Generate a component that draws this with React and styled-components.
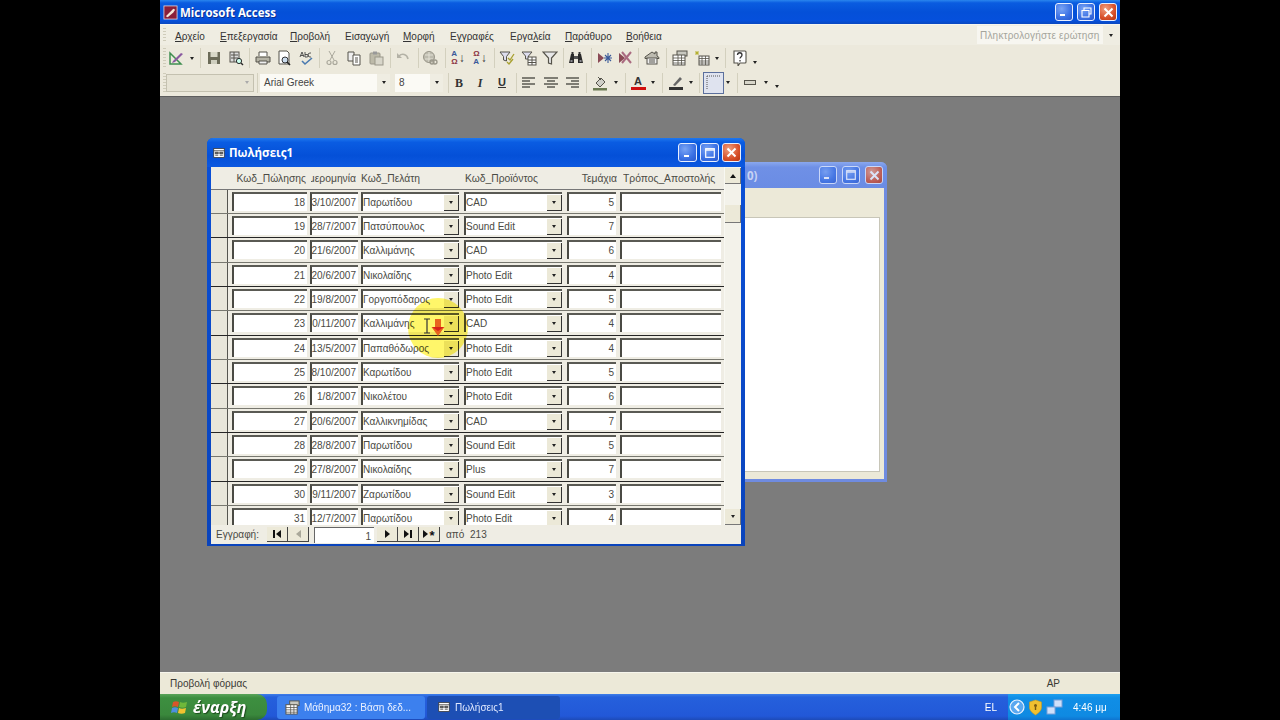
import React from 'react';
import styled, { createGlobalStyle, css } from 'styled-components';

const Global = createGlobalStyle`
  html, body { margin: 0; padding: 0; background: #000; }
  body { font-family: "Liberation Sans", Arial, sans-serif; font-size: 10px; color: #222; }
  * { box-sizing: border-box; }
`;

const Stage = styled.div`
  width: 1280px; height: 720px; background: #000; display: flex; justify-content: center; overflow: hidden;
`;
const Desktop = styled.div`
  width: 960px; height: 720px; display: flex; flex-direction: column; position: relative; filter: blur(0.35px);
`;
const MainTitle = styled.div`
  height: 24px; flex: none; display: flex; align-items: center; padding: 0 3px 0 3px; gap: 2px;
  background: linear-gradient(180deg, #2a86ee 0%, #0a5ce0 12%, #0450d8 50%, #0550dc 85%, #0a48c0 100%);
  color: #fff; font: bold 11.5px "Open Sans", "Liberation Sans", sans-serif;
  text-shadow: 1px 1px 0 #0a2f90;
`;
const TitleText = styled.span`flex: 1; white-space: nowrap;`;
const Controls = styled.div`display: flex; gap: ${p => p.$gap ?? 4}px; align-items: center;`;
const Ctl = styled.div`
  width: ${p => p.$s ?? 18}px; height: ${p => p.$s ?? 18}px; border-radius: 3px; border: 1px solid #e8efff;
  display: flex; align-items: center; justify-content: center; opacity: ${p => p.$dim ? 0.75 : 1};
  background: ${p => p.$red
    ? 'radial-gradient(circle at 35% 30%, #f0a080, #d8502a 60%, #b83410)'
    : 'radial-gradient(circle at 35% 30%, #7aa4f4, #3a70e4 60%, #2a58cc)'};
`;
const Menu = styled.div`
  height: 21px; flex: none; display: flex; align-items: center; position: relative; background: #efede2;
  border-top: 1px solid #f6f5ee;
`;
const Grip = styled.div`
  width: 3px; height: ${p => p.$h ?? 15}px; margin-left: 3px; flex: none;
  background-image: linear-gradient(#cfccba 50%, transparent 50%); background-size: 3px 3px;
`;
const MenuItem = styled.span`
  position: relative; margin-left: ${p => p.$ml}px; font: 10px "Liberation Sans", sans-serif; color: #333; white-space: nowrap;
  width: ${p => p.$w}px; flex: none; padding-top: 2px;
  u { text-decoration-thickness: 1px; text-underline-offset: 1px; }
`;
const Ask = styled.div`
  margin-left: auto; width: 126px; height: 18px; background: #f7f6f0; color: #a5a59c; display: flex; align-items: center;
  font: 10px "Liberation Sans", sans-serif; padding-left: 3px; white-space: nowrap; overflow: hidden; letter-spacing: .2px;
`;
const Drop = styled.i`
  display: block; width: 0; height: 0; flex: none; border-left: 2.5px solid transparent; border-right: 2.5px solid transparent;
  border-top: 3px solid ${p => p.$c ?? '#222'};
`;
const AskDrop = styled.div`width: 15px; display: flex; justify-content: center; margin-right: 2px; flex: none;`;
const Toolbar = styled.div`
  height: ${p => p.$h}px; flex: none; display: flex; align-items: center; background: #ece9dc;
  padding-bottom: ${p => p.$pb ?? 0}px;
`;
const Tool = styled.div`
  flex: none; width: ${p => p.$w}px; margin-left: ${p => p.$ml}px; display: flex; align-items: center; justify-content: center;
  ${p => p.$low && css`padding-top: 8px;`}
`;
const Sep = styled.div`
  flex: none; width: 1px; height: 20px; background: #d3d0be; margin-left: ${p => p.$ml}px;
`;
const Combo = styled.div`
  flex: none; width: ${p => p.$w}px; margin-left: ${p => p.$ml}px; height: 18px; display: flex; align-items: center;
  background: ${p => p.$off ? '#e6e3d4' : '#fbfaf5'}; border: ${p => p.$off ? '1px solid #c4c1b0' : 'none'};
  font: 10px "Liberation Sans", sans-serif; color: #444; padding-left: 4px; justify-content: space-between;
`;
const ComboArrow = styled.div`
  width: 13px; height: 100%; display: flex; align-items: center; justify-content: center; background: ${p => p.$off ? 'transparent' : '#efede2'};
`;
const Pressed = styled.div`
  width: 21px; height: 22px; border: 1px solid #5b6f9c; background: #dfe3ef; display: flex; align-items: center; justify-content: center;
`;
const Mdi = styled.div`
  flex: 1; background: #7c7c7c; position: relative; overflow: hidden; border-top: 1px solid #5e5e5e;
`;
const Win = styled.div`
  position: absolute; left: ${p => p.$x}px; top: ${p => p.$y}px; width: ${p => p.$w}px; height: ${p => p.$h}px;
  border-radius: 6px 6px 0 0; display: flex; flex-direction: column;
  background: ${p => p.$back ? '#6f8be0' : 'linear-gradient(180deg, #0a50d8, #0a44bc)'};
  padding: 0 ${p => p.$back ? 3 : 4}px ${p => p.$back ? 3 : 2}px;
`;
const WinTitle = styled.div`
  height: ${p => p.$back ? 26 : 29}px; flex: none; display: flex; align-items: center; gap: 4px; margin: 0 -${p => p.$back ? 3 : 4}px; padding: 0 4px 0 ${p => p.$pl}px;
  border-radius: 6px 6px 0 0;
  color: ${p => p.$back ? '#c6d2f4' : '#fff'}; font: bold 11.5px "Open Sans", "Liberation Sans", sans-serif;
  background: ${p => p.$back
    ? 'linear-gradient(180deg, #8aa8ee, #6f90e6 20%, #6a8ce4)'
    : 'linear-gradient(180deg, #1f78ee 0%, #0a5ce2 15%, #0450d8 60%, #0c58e0 100%)'};
`;
const BackBody = styled.div`
  flex: 1; background: #ece9d8; display: flex; flex-direction: column; padding: 29px 4px 7px 0;
`;
const BackSheet = styled.div`flex: 1; background: #fff; border: 1px solid #c8c6b8;`;
const Client = styled.div`flex: 1; display: flex; flex-direction: column; background: #efede4; min-height: 0;`;
const FormArea = styled.div`height: 358px; flex: none; display: flex;`;
const Records = styled.div`width: 513px; flex: none; overflow: hidden;`;
const HeaderRow = styled.div`
  height: 23px; display: flex; align-items: center; padding-left: 21px; border-bottom: 1px solid #777;
`;
const HeadCell = styled.div`
  flex: none; width: ${p => p.$w}px; margin-left: ${p => p.$ml}px; overflow: hidden; white-space: nowrap; display: flex;
  justify-content: ${p => p.$right ? 'flex-end' : 'flex-start'}; color: #4b4b45; font-size: 10.3px;
`;
const Row = styled.div`
  height: ${p => p.$h}px; display: flex; border-bottom: 1px solid ${p => p.$dark ? '#262626' : '#77776f'};
`;
const Selector = styled.div`
  width: 17px; flex: none; background: #e8e6da; border-right: 1px solid #55554f;
`;
const Fields = styled.div`display: flex; padding: 2px 0 0 4px;`;
const Field = styled.div`
  flex: none; width: ${p => p.$w}px; margin-left: ${p => p.$ml}px; height: 19px; background: #fff; display: flex; align-items: center;
  border-top: 2px solid #5a5a54; border-left: 2px solid #4a4a44; overflow: hidden; white-space: nowrap;
  justify-content: ${p => p.$right ? 'flex-end' : 'space-between'}; color: #4a4a44;
  padding: ${p => p.$right ? '0 2px 0 0' : '0'}; font-size: 10px;
`;
const FieldText = styled.span`flex: none;`;
const FieldBtn = styled.div`
  width: 15px; height: 16px; flex: none; background: #ece9d8; display: flex; align-items: center; justify-content: center;
  border-right: 1px solid #333; border-bottom: 1px solid #333;
`;
const ScrollBar = styled.div`
  width: 17px; flex: none; display: flex; flex-direction: column; background: #f3f2ea; border-left: 1px solid #f8f8f2;
`;
const ScrollBtn = styled.div`
  height: 16px; flex: none; background: #ece9d8; display: flex; align-items: center; justify-content: center;
  border-right: 1px solid #777; border-bottom: 1px solid #777; margin-top: ${p => p.$mt ?? 0}px;
`;
const Up = styled.i`
  display: block; width: 0; height: 0; border-left: 3.5px solid transparent; border-right: 3.5px solid transparent;
  border-bottom: 4px solid #111;
`;
const Thumb = styled(ScrollBtn)`height: 18px; margin-top: 21px;`;
const ScrollSpace = styled.div`flex: 1;`;
const NavBar = styled.div`
  height: 19px; flex: none; display: flex; align-items: center; color: #4a4a44; font-size: 10px; padding-left: 5px;
`;
const NavLabel = styled.span`width: 51px; flex: none; white-space: nowrap;`;
const NavBtn = styled.div`
  width: 21px; height: 15px; flex: none; display: flex; align-items: center; justify-content: center; background: #ece9d8;
  border-right: 1px solid #444; border-bottom: 1px solid #444; gap: 1px;
`;
const NavInput = styled.div`
  width: 60px; height: 16px; margin: 0 3px 0 5px; flex: none; background: #fff; border-top: 1px solid #666; border-left: 1px solid #666;
  display: flex; align-items: center; justify-content: flex-end; padding-right: 3px; font-size: 10px; padding-top: 2px;
`;
const NavTotal = styled.span`margin-left: 6px; white-space: nowrap; word-spacing: 3px;`;
const Tri = styled.i`
  display: block; width: 0; height: 0; border-top: 4px solid transparent; border-bottom: 4px solid transparent;
  ${p => p.$left ? css`border-right: 5px solid ${p.$c ?? '#111'};` : css`border-left: 5px solid ${p.$c ?? '#111'};`}
`;
const Bar = styled.i`display: block; width: 2px; height: 8px; background: #111;`;
const Star = styled.span`font: bold 13px "Liberation Sans", sans-serif; color: #111; line-height: 10px; padding-top: 3px;`;

const Highlight = styled.div`
  position: absolute; left: 248px; top: 201px; width: 60px; height: 60px; border-radius: 50%; background: #fff66a;
  mix-blend-mode: multiply; pointer-events: none;
`;
const Pointer = styled.svg`position: absolute; left: 248px; top: 201px; pointer-events: none;`;
const Status = styled.div`
  height: 22px; flex: none; background: #ece9d8; display: flex; align-items: center; font: 10px "Liberation Sans", sans-serif;
  color: #3a3a34; padding-left: 10px; justify-content: space-between; padding-right: 60px; border-top: 1px solid #f6f5ec;
`;
const Taskbar = styled.div`
  height: 26px; flex: none; display: flex; align-items: center;
  background: linear-gradient(180deg, #3f7ee8 0%, #2560dc 12%, #2258d8 85%, #1d4ab8 100%);
`;
const Start = styled.div`
  width: 107px; height: 26px; flex: none; display: flex; align-items: center; gap: 4px; padding-left: 11px;
  border-radius: 0 10px 10px 0; color: #fff; font: italic bold 16px "Open Sans", "Liberation Sans", sans-serif;
  background: linear-gradient(180deg, #5aa45a 0%, #3d8f40 15%, #3a883c 80%, #2c6c30 100%); text-shadow: 1px 1px 1px #1d4a1d;
`;
const TaskBtn = styled.div`
  height: 23px; width: ${p => p.$w}px; margin-left: ${p => p.$ml}px; flex: none; border-radius: 3px; display: flex; align-items: center; gap: ${p => p.$on ? 4 : 5}px; padding-left: ${p => p.$on ? 8 : 11}px;
  color: ${p => p.$on ? '#eaf0ff' : '#dfe8ff'}; font: 10px "Liberation Sans", sans-serif; white-space: nowrap; overflow: hidden;
  background: ${p => p.$on ? '#3c80ee' : '#1d4fb4'};
`;
const Lang = styled.span`margin-left: auto; color: #fff; font: 10px "Liberation Sans", sans-serif; margin-right: 11px;`;
const Tray = styled.div`
  width: 112px; height: 26px; flex: none; display: flex; align-items: center; gap: 3px; padding-left: 1px;
  background: linear-gradient(180deg, #1da0f0 0%, #108ee6 15%, #0f8ae2 85%, #0f74d0 100%); color: #fff; font: 10px "Liberation Sans", sans-serif;
`;
const Clock = styled.span`margin-left: 7px; white-space: nowrap;`;

const G = { g: '#9a978a', d: '#55534a', b: '#3a5a9a', k: '#2a2a2a' };
const icons = {
  wizard: <><path d="M2 14V3l11 11z" fill="none" stroke="#3f8f50" strokeWidth="1.5"/><path d="M5 11L13 3l2 1-8 8-3 1z" fill="#8a5aa0"/></>,
  save: <><rect x="2" y="2" width="12" height="12" fill="#6b6b58"/><rect x="4.5" y="2" width="7" height="5" fill="#d8d8c8"/><rect x="5" y="10" width="6" height="4" fill="#cfcfbf"/></>,
  dbsearch: <><rect x="2" y="2" width="9" height="10" fill="#ddd" stroke={G.d}/><path d="M3 5h7M3 8h7M6 2v10" stroke={G.d}/><circle cx="11" cy="11" r="2.6" fill="#cfe" stroke={G.k}/><path d="M13 13l2 2" stroke={G.k} strokeWidth="1.5"/></>,
  print: <><path d="M4 6V2h8v4" fill="#fff" stroke={G.d}/><path d="M1 7h14v5H1z" fill="#b5b3a5" stroke={G.d}/><path d="M4 11h8v3H4z" fill="#eee" stroke={G.d}/></>,
  preview: <><path d="M3 1h8l2 2v11H3z" fill="#fff" stroke={G.d}/><circle cx="9" cy="10" r="3" fill="#cde" stroke="#333"/><path d="M11 12l3 3" stroke="#222" strokeWidth="1.6"/></>,
  spell: <><path d="M3 7L5 2l2 5M3.6 5.5h2.8M8 2v5h2a1.2 1.2 0 000-2.5H8M14 3h-1a2 2 0 000 4h1" fill="none" stroke="#444" strokeWidth=".9"/><path d="M5 11l3 3 7-6" fill="none" stroke="#4a7ab0" strokeWidth="1.6"/></>,
  cut: <><path d="M5 1l5 9M11 1L6 10" stroke="#aaa89c"/><circle cx="5" cy="12.5" r="2" fill="none" stroke="#aaa89c" strokeWidth="1.2"/><circle cx="11" cy="12.5" r="2" fill="none" stroke="#aaa89c" strokeWidth="1.2"/></>,
  copy: <><path d="M2 2h6v9H2z" fill="#eee" stroke={G.d}/><path d="M7 5h7v10H7z" fill="#fff" stroke={G.d}/><path d="M9 8h3M9 10h3M9 12h3" stroke={G.d}/></>,
  paste: <><rect x="2" y="3" width="10" height="11" rx="1" fill="#bdbaa9" stroke={G.g}/><rect x="5" y="1.5" width="4" height="3" fill="#999"/><rect x="7" y="7" width="8" height="8" fill="#d8d6ca" stroke={G.g}/></>,
  undo: <><path d="M4 6c3-3 8-2 9 3" fill="none" stroke="#b4b2a6" strokeWidth="1.6"/><path d="M2 3v5h5z" fill="#b4b2a6"/></>,
  link: <><circle cx="7" cy="7" r="5.5" fill="#bdbbae" stroke={G.g}/><path d="M3 5h8M3 9h8M7 2v10" stroke="#e2e0d4"/><circle cx="10" cy="12" r="2" fill="none" stroke={G.g} strokeWidth="1.3"/><circle cx="13" cy="12" r="2" fill="none" stroke={G.g} strokeWidth="1.3"/></>,
  filter1: <><path d="M1 2h10L7.5 6.5V11l-3-1V6.5z" fill="#dde" stroke={G.d}/><path d="M9 8l2 2 4-6M8 12l2 2 4-5" fill="none" stroke="#a8a030" strokeWidth="1.3"/></>,
  filter2: <><path d="M1 2h10L7.5 6v3h-3V6z" fill="#dde" stroke={G.d}/><rect x="7" y="7" width="8" height="8" fill="#fff" stroke={G.d}/><path d="M7 10h8M7 12.5h8M11 7v8" stroke={G.d}/></>,
  filter3: <path d="M1 2h14L9.5 8v6l-3-1V8z" fill="#e8e8e8" stroke={G.d} strokeWidth="1.2"/>,
  bino: <><path d="M1 13l2-9h3v9zM15 13l-2-9h-3v9z" fill="#2a2a2a"/><rect x="6" y="6" width="4" height="3" fill="#555"/><path d="M3.5 2h2v2h-2zM10.5 2h2v2h-2z" fill="#333"/><path d="M2.5 10h2v2h-2zM11.5 10h2v2h-2z" fill="#8a8a90"/></>,
  newrec: <><path d="M2 3l6 5-6 5z" fill="#8a4a55"/><path d="M12 3v10M8 8h8M9 5l6 6M15 5l-6 6" stroke={G.b} strokeWidth="1.1"/></>,
  delrec: <><path d="M2 3l6 5-6 5z" fill="#8a4a55"/><path d="M5 2l9 11M14 2L5 13" stroke="#aa6a80" strokeWidth="2"/></>,
  props: <><path d="M1 7L8 2l3 2V2h2v4l2 1.5v1H1z" fill="#bdbbb0" stroke={G.d}/><rect x="3" y="8" width="10" height="6" fill="#eee" stroke={G.d}/><path d="M5 10h6M5 12h6" stroke={G.d}/></>,
  window: <><rect x="5" y="1" width="10" height="5" fill="#c8c8c0" stroke={G.d}/><rect x="1" y="5" width="12" height="10" fill="#fff" stroke={G.d}/><path d="M1 8h12M1 10.5h12M1 13h12M6 5v10M9.5 5v10" stroke={G.d} strokeWidth=".8"/></>,
  newobj: <><path d="M3 1v4M1 3h4M1.5 1.5l3 3M4.5 1.5l-3 3" stroke="#b5b030"/><rect x="5" y="6" width="10" height="9" fill="#fff" stroke={G.d}/><path d="M5 8.5h10M5 11h10M5 13h10M8 6v9M11.5 6v9" stroke={G.d} strokeWidth=".8"/></>,
  help: <><path d="M2 1h11a1 1 0 011 1v10a1 1 0 01-1 1H8l-2 3v-3H2z" fill="#fff" stroke={G.d} strokeWidth="1.1"/><path d="M5.5 5c0-3 4.5-3 4.5 0 0 2-2 2-2 3.5" fill="none" stroke="#333" strokeWidth="1.3"/><path d="M8 10v1.5" stroke="#333" strokeWidth="1.3"/></>,
  left: <path d="M1 3h13M1 6h8M1 9h13M1 12h8" stroke="#5a5a52" strokeWidth="1.3"/>,
  center: <path d="M1 3h14M4 6h8M1 9h14M4 12h8" stroke="#5a5a52" strokeWidth="1.3"/>,
  right: <path d="M2 3h13M7 6h8M2 9h13M7 12h8" stroke="#5a5a52" strokeWidth="1.3"/>,
  fill: <><path d="M4 8l5-5 4 4-5 5z" fill="#cfcfc8" stroke={G.d}/><path d="M6 2l3 3" stroke={G.d}/><rect x="1" y="13" width="14" height="2.5" fill="#6b7a52"/></>,
  line: <><rect x="1" y="12" width="14" height="3" fill="#333"/><path d="M5 10l7-8 2 2-7 7z" fill="#666"/></>,
  rect: <rect x="2.5" y="5.5" width="11" height="4" fill="#d8d6ca" stroke={G.d}/>,
  form: <><rect x="1" y="2" width="14" height="12" fill="#fff" stroke="#333"/><path d="M1 5h14M3 7h4v2H3zM9 7h4v2H9zM3 11h4M9 11h4" fill="#777" stroke="#333"/></>,
  access: <><rect x="1" y="1" width="14" height="14" fill="#8a1f3a" stroke="#f0e0e0" strokeWidth=".8"/><path d="M3 12l8-8 2 1-2 3-6 5z" fill="#f4e6d8"/></>,
};
const Ic = ({ n, s = 16 }) => <svg width={s} height={s} viewBox="0 0 16 16">{icons[n]}</svg>;
const TextIc = styled.span`
  font: ${p => p.$f}; color: ${p => p.$c ?? '#333'}; line-height: 1; text-decoration: ${p => p.$u ? 'underline' : 'none'};
`;
const SortBox = styled.div`
  display: flex; align-items: center; gap: 1px; font: bold 8px "Liberation Sans", sans-serif; line-height: 8px;
`;
const SortLetters = styled.div`display: flex; flex-direction: column; color: ${p => p.$c};`;
const SortLetter = styled.span`color: ${p => p.$c};`;
const SortArrow = styled.span`font-size: 12px; color: #333; font-weight: 400;`;
const Sort = ({ a, b, ca, cb }) => (
  <SortBox><SortLetters><SortLetter $c={ca}>{a}</SortLetter><SortLetter $c={cb}>{b}</SortLetter></SortLetters><SortArrow>↓</SortArrow></SortBox>
);
const ColorA = styled.div`display: flex; flex-direction: column; align-items: center; font: bold 11px "Liberation Sans", sans-serif; color: #333; line-height: 10px;`;
const ColorBar = styled.i`display: block; width: 15px; height: 3px; background: #d01010; margin-top: 1px;`;

// Items are given by the x centre they sit on in the window; spacing is derived from those centres.
const flowItems = (items, startX) => {
  let x = startX;
  return items.map(it => {
    const w = it.w ?? 16;
    const ml = it.c - w / 2 - x;
    x = it.c + w / 2;
    return { ...it, w, ml };
  });
};
const renderItem = (it, i) => {
  if (it.k === 'sep') return <Sep key={i} $ml={it.ml} />;
  if (it.k === 'dd') return <Tool key={i} $w={it.w} $ml={it.ml} $low={it.low}><Drop /></Tool>;
  if (it.k === 'combo') return (
    <Combo key={i} $w={it.w} $ml={it.ml} $off={it.off}><span>{it.t}</span><ComboArrow $off={it.off}><Drop $c={it.off ? '#aaa' : '#222'} /></ComboArrow></Combo>
  );
  return <Tool key={i} $w={it.w} $ml={it.ml}>{it.el ?? <Ic n={it.k} />}</Tool>;
};
const sep = c => ({ k: 'sep', c, w: 1 });
const dd = (c, low) => ({ k: 'dd', c, w: 7, low });
const ic = (k, c) => ({ k, c });

const bar1 = flowItems([
  ic('wizard', 178), dd(194), sep(202), ic('save', 216), ic('dbsearch', 238), sep(251), ic('print', 265), ic('preview', 286), ic('spell', 307), sep(321),
  ic('cut', 334), ic('copy', 356), ic('paste', 378), sep(392), ic('undo', 405), sep(420), ic('link', 432), sep(447),
  { k: 'az', c: 460, el: <Sort a="A" b="Ω" ca="#3a5a9a" cb="#8a3040" /> }, { k: 'za', c: 482, el: <Sort a="Ω" b="A" ca="#8a3040" cb="#3a5a9a" /> }, sep(496),
  ic('filter1', 509), ic('filter2', 531), ic('filter3', 552), sep(565), ic('bino', 578), sep(593), ic('newrec', 606), ic('delrec', 627), sep(640),
  ic('props', 654), sep(668), ic('window', 682), ic('newobj', 704), dd(719), sep(727), ic('help', 742), dd(757, true),
], 168);

const bar2 = flowItems([
  { k: 'combo', c: 212, w: 88, off: true, t: '' }, sep(259), { k: 'combo', c: 327, w: 130, t: 'Arial Greek' }, { k: 'combo', c: 421, w: 48, t: '8' }, sep(450),
  { k: 'b', c: 461, el: <TextIc $f='bold 12px "Liberation Serif", serif'>B</TextIc> },
  { k: 'i', c: 482, el: <TextIc $f='italic bold 12px "Liberation Serif", serif'>I</TextIc> },
  { k: 'u', c: 504, el: <TextIc $u $f='bold 11px "Liberation Sans", sans-serif'>U</TextIc> }, sep(518),
  ic('left', 531), ic('center', 553), ic('right', 574), sep(588), ic('fill', 602), dd(618), sep(627),
  { k: 'a', c: 640, el: <ColorA>A<ColorBar /></ColorA> }, dd(655), sep(664), ic('line', 678), dd(693), sep(701),
  { k: 'pressed', c: 715.5, w: 21, el: <Pressed><svg width="15" height="16" viewBox="0 0 15 16"><path d="M1 1h13M1 1v14" stroke="#555" strokeWidth="1" strokeDasharray="1 1" fill="none"/></svg></Pressed> },
  dd(730), sep(739), ic('rect', 752), dd(768), dd(779, true),
], 168);

const menus = [
  [<><u>Α</u>ρχείο</>, 15, 45], [<><u>Ε</u>πεξεργασία</>, 0, 70], [<><u>Π</u>ροβολή</>, 0, 55], [<>Εισα<u>γ</u>ωγή</>, 0, 58], [<><u>Μ</u>ορφή</>, 0, 47],
  [<>Ε<u>γ</u>γραφές</>, 0, 60], [<>Εργα<u>λ</u>εία</>, 0, 55], [<><u>Π</u>αράθυρο</>, 0, 61], [<><u>Β</u>οήθεια</>, 0, 40],
];
const rows = [
  [18, '13/10/2007', 'Παρωτίδου', 'CAD', 5], [19, '28/7/2007', 'Πατσύπουλος', 'Sound Edit', 7], [20, '21/6/2007', 'Καλλιμάνης', 'CAD', 6],
  [21, '20/6/2007', 'Νικολαίδης', 'Photo Edit', 4], [22, '19/8/2007', 'Γοργοπόδαρος', 'Photo Edit', 5], [23, '30/11/2007', 'Καλλιμάνης', 'CAD', 4],
  [24, '13/5/2007', 'Παπαθόδωρος', 'Photo Edit', 4], [25, '18/10/2007', 'Καρωτίδου', 'Photo Edit', 5], [26, '1/8/2007', 'Νικολέτου', 'Photo Edit', 6],
  [27, '20/6/2007', 'Καλλικνημίδας', 'CAD', 7], [28, '28/8/2007', 'Παρωτίδου', 'Sound Edit', 5], [29, '27/8/2007', 'Νικολαίδης', 'Plus', 7],
  [30, '19/11/2007', 'Ζαρωτίδου', 'Sound Edit', 3], [31, '12/7/2007', 'Παρωτίδου', 'Photo Edit', 4],
];

const Minus = () => <svg width="10" height="10" viewBox="0 0 10 10"><rect x="1" y="7" width="5" height="2" fill="#fff"/></svg>;
const Maxi = () => <svg width="10" height="10" viewBox="0 0 10 10"><rect x=".7" y=".7" width="8.6" height="8.6" fill="none" stroke="#fff" strokeWidth="1.2"/><path d="M1 2h8" stroke="#fff" strokeWidth="1.4"/></svg>;
const Restore = () => <svg width="11" height="11" viewBox="0 0 11 11"><path d="M3 3V1h7v6H8M1 3.5h7v6.5H1z" fill="none" stroke="#fff" strokeWidth="1.1"/></svg>;
const Close = () => <svg width="11" height="11" viewBox="0 0 11 11"><path d="M1.5 1.5l8 8M9.5 1.5l-8 8" stroke="#fff" strokeWidth="2"/></svg>;
const Flag = () => (
  <svg width="18" height="17" viewBox="0 0 18 17">
    <path d="M2 3c2-1 4-1 6 0l-1 5c-2-1-4-1-6 0z" fill="#d8552a"/><path d="M9 3c2 1 4 1 7 0l-1 5c-2 1-5 1-7 0z" fill="#6fb83a"/>
    <path d="M1 9c2-1 4-1 6 0l-1 5c-2-1-4-1-6 0z" fill="#4d8fe0"/><path d="M8 9c2 1 4 1 7 0l-1 5c-2 1-5 1-7 0z" fill="#f0c230"/>
  </svg>
);

const Field_ = ({ label, w, ml, right }) => <HeadCell $w={w} $ml={ml} $right={right}>{label}</HeadCell>;

export default function App() {
  return (
    <>
      <Global />
      <Stage>
        <Desktop>
          <MainTitle>
            <Ic n="access" s={15} />
            <TitleText>Microsoft Access</TitleText>
            <Controls>
              <Ctl><Minus /></Ctl><Ctl><Restore /></Ctl><Ctl $red><Close /></Ctl>
            </Controls>
          </MainTitle>
          <Menu>
            <Grip />
            {menus.map(([t, ml, w], i) => <MenuItem key={i} $ml={i === 0 ? 9 : ml} $w={w}>{t}</MenuItem>)}
            <Ask>Πληκτρολογήστε ερώτηση</Ask>
            <AskDrop><Drop /></AskDrop>
          </Menu>
          <Toolbar $h={26}><Grip $h={20} />{bar1.map((it, i) => renderItem(it, i))}</Toolbar>
          <Toolbar $h={25} $pb={2}><Grip $h={20} />{bar2.map((it, i) => renderItem(it, i))}</Toolbar>
          <Mdi>
            <Win $back $x={440} $y={65} $w={287} $h={320}>
              <WinTitle $back $pl={147}>
                <TitleText>0)</TitleText>
                <Controls $gap={5}>
                  <Ctl $dim><Minus /></Ctl><Ctl $dim><Maxi /></Ctl><Ctl $dim $red><Close /></Ctl>
                </Controls>
              </WinTitle>
              <BackBody><BackSheet /></BackBody>
            </Win>
            <Win $x={47} $y={41} $w={538} $h={408}>
              <WinTitle $pl={6}>
                <Ic n="form" s={12} />
                <TitleText>Πωλήσεις1</TitleText>
                <Controls $gap={3}>
                  <Ctl $s={19}><Minus /></Ctl><Ctl $s={19}><Maxi /></Ctl><Ctl $s={19} $red><Close /></Ctl>
                </Controls>
              </WinTitle>
              <Client>
                <FormArea>
                  <Records>
                    <HeaderRow>
                      <Field_ label="Κωδ_Πώλησης" w={74} ml={0} right />
                      <Field_ label="Ημερομηνία" w={45} ml={5} right />
                      <Field_ label="Κωδ_Πελάτη" w={98} ml={5} />
                      <Field_ label="Κωδ_Προϊόντος" w={98} ml={6} />
                      <Field_ label="Τεμάχια" w={49} ml={5} right />
                      <Field_ label="Τρόπος_Αποστολής" w={101} ml={6} />
                    </HeaderRow>
                    {rows.map((r, i) => (
                      <Row key={r[0]} $h={i % 3 === 2 ? 25 : 24} $dark={i % 2 === 1}>
                        <Selector />
                        <Fields>
                          <Field $w={75} $ml={0} $right>{r[0]}</Field>
                          <Field $w={48} $ml={3} $right>{r[1]}</Field>
                          <Field $w={98} $ml={3}><FieldText>{r[2]}</FieldText><FieldBtn><Drop /></FieldBtn></Field>
                          <Field $w={98} $ml={5}><FieldText>{r[3]}</FieldText><FieldBtn><Drop /></FieldBtn></Field>
                          <Field $w={49} $ml={5} $right>{r[4]}</Field>
                          <Field $w={101} $ml={4} />
                        </Fields>
                      </Row>
                    ))}
                  </Records>
                  <ScrollBar>
                    <ScrollBtn $mt={1}><Up /></ScrollBtn>
                    <Thumb />
                    <ScrollSpace />
                    <ScrollBtn><Drop /></ScrollBtn>
                  </ScrollBar>
                </FormArea>
                <NavBar>
                  <NavLabel>Εγγραφή:</NavLabel>
                  <NavBtn><Bar /><Tri $left /></NavBtn>
                  <NavBtn><Tri $left $c="#aaa89a" /></NavBtn>
                  <NavInput>1</NavInput>
                  <NavBtn><Tri /></NavBtn>
                  <NavBtn><Tri /><Bar /></NavBtn>
                  <NavBtn><Tri /><Star>*</Star></NavBtn>
                  <NavTotal>από 213</NavTotal>
                </NavBar>
              </Client>
            </Win>
            <Highlight />
            <Pointer width="60" height="60" viewBox="0 0 60 60">
              <path d="M16 21h6M19 21v14M16 35h6" stroke="#333" strokeWidth="1.2" fill="none"/>
              <path d="M27 21h6v8h3.5L30 38l-6.5-9H27z" fill="#e8641e"/><path d="M24 29h12l-6 4z" fill="#d8201a"/>
            </Pointer>
          </Mdi>
          <Status><span>Προβολή φόρμας</span><span>AP</span></Status>
          <Taskbar>
            <Start><Flag />έναρξη</Start>
            <TaskBtn $on $w={148} $ml={10}><Ic n="window" s={15} />Μάθημα32 : Βάση δεδ...</TaskBtn>
            <TaskBtn $w={133} $ml={2}><Ic n="form" s={12} />Πωλήσεις1</TaskBtn>
            <Lang>EL</Lang>
            <Tray>
              <svg width="16" height="18" viewBox="0 0 16 18"><circle cx="8" cy="9" r="7" fill="#5aa8f0" stroke="#e8f2ff" strokeWidth="1.2"/><path d="M10 5L6 9l4 4" fill="none" stroke="#fff" strokeWidth="2"/></svg>
              <svg width="15" height="17" viewBox="0 0 15 17"><path d="M7.5 1l6 2v5c0 4-3 6-6 8-3-2-6-4-6-8V3z" fill="#f0c030" stroke="#c89a20" strokeWidth=".6"/><circle cx="7.5" cy="6.5" r="1.5" fill="#7a5a10"/><path d="M7.5 8v3" stroke="#7a5a10" strokeWidth="1.4"/></svg>
              <svg width="17" height="17" viewBox="0 0 17 17"><rect x="8" y="1" width="8" height="7" fill="#cfe0fa" stroke="#7aa0d8"/><rect x="1" y="8" width="8" height="7" fill="#cfe0fa" stroke="#7aa0d8"/></svg>
              <Clock>4:46 μμ</Clock>
            </Tray>
          </Taskbar>
        </Desktop>
      </Stage>
    </>
  );
}
